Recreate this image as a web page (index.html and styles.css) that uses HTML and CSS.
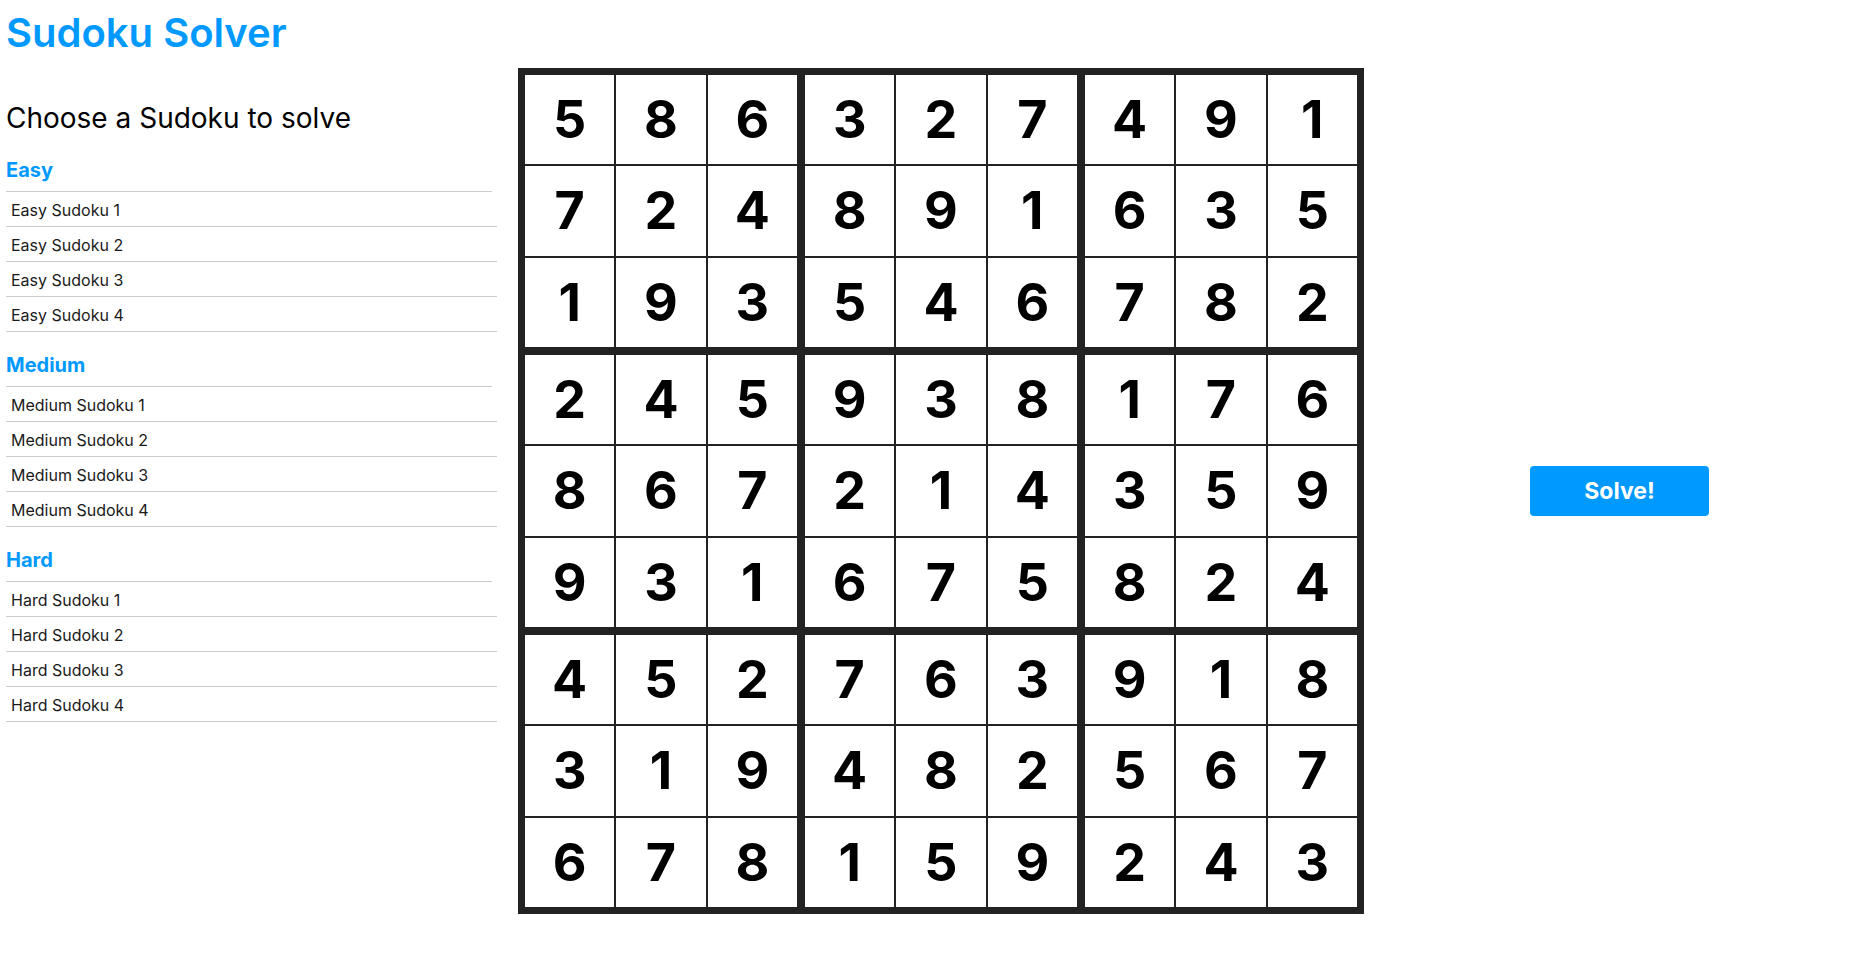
FILE: index.html
```html
<!DOCTYPE html>
<html lang="en">
<head>
  <meta charset="UTF-8">
  <meta name="viewport" content="width=device-width, initial-scale=1.0">
  <title>Sudoku Solver</title>
  <link rel="stylesheet" href="styles.css">
</head>
<body>
  <h1 class="title">Sudoku Solver</h1>

  <main class="layout">
    <aside class="sidebar">
      <h2 class="sidebar-title">Choose a Sudoku to solve</h2>

      <h3 class="level">Easy</h3>
      <ul class="puzzle-list">
        <li>Easy Sudoku 1</li>
        <li>Easy Sudoku 2</li>
        <li>Easy Sudoku 3</li>
        <li>Easy Sudoku 4</li>
      </ul>

      <h3 class="level">Medium</h3>
      <ul class="puzzle-list">
        <li>Medium Sudoku 1</li>
        <li>Medium Sudoku 2</li>
        <li>Medium Sudoku 3</li>
        <li>Medium Sudoku 4</li>
      </ul>

      <h3 class="level">Hard</h3>
      <ul class="puzzle-list">
        <li>Hard Sudoku 1</li>
        <li>Hard Sudoku 2</li>
        <li>Hard Sudoku 3</li>
        <li>Hard Sudoku 4</li>
      </ul>
    </aside>

    <div class="board" id="board"></div>

    <div class="actions">
      <button id="solve" class="solve-btn">Solve!</button>
    </div>
  </main>

  <script>
    // current grid (already solved)
    const grid = [
      [5, 8, 6, 3, 2, 7, 4, 9, 1],
      [7, 2, 4, 8, 9, 1, 6, 3, 5],
      [1, 9, 3, 5, 4, 6, 7, 8, 2],
      [2, 4, 5, 9, 3, 8, 1, 7, 6],
      [8, 6, 7, 2, 1, 4, 3, 5, 9],
      [9, 3, 1, 6, 7, 5, 8, 2, 4],
      [4, 5, 2, 7, 6, 3, 9, 1, 8],
      [3, 1, 9, 4, 8, 2, 5, 6, 7],
      [6, 7, 8, 1, 5, 9, 2, 4, 3]
    ];

    function drawBoard() {
      const board = document.getElementById('board');
      board.innerHTML = '';
      // 9 boxes of 3x3, filled box by box
      for (let b = 0; b < 9; b++) {
        const box = document.createElement('div');
        box.className = 'box';
        const r0 = Math.floor(b / 3) * 3;
        const c0 = (b % 3) * 3;
        for (let i = 0; i < 9; i++) {
          const cell = document.createElement('div');
          cell.className = 'cell';
          const v = grid[r0 + Math.floor(i / 3)][c0 + (i % 3)];
          cell.textContent = v ? v : '';
          box.appendChild(cell);
        }
        board.appendChild(box);
      }
    }

    drawBoard();
  </script>
</body>
</html>
```

FILE: styles.css
```css
/* General */
body {
  margin: 0;
  padding: 0 6px;
  font-family: Inter, "Noto Sans", sans-serif;
  color: #1a1a1a;
  background: #fff;
}

.title {
  margin: 9px 0 11px;
  font-size: 40px;
  font-weight: 600;
  color: #0099ff;
  line-height: 48px;
}

.layout {
  display: flex;
  align-items: flex-start;
}

/* Sidebar with the puzzle lists */
.sidebar {
  width: 491px;
  flex-shrink: 0;
}

.sidebar-title {
  margin: 33px 0 22px;
  font-size: 28px;
  font-weight: 400;
  line-height: 34px;
  color: #000;
}

.level {
  width: calc(100% - 5px);
  margin: 0;
  padding: 1px 0 9px;
  border-bottom: 1px solid #cccccc;
  font-size: 20px;
  font-weight: 700;
  line-height: 24px;
  color: #0099ff;
}

.puzzle-list {
  list-style: none;
  margin: 0 0 20px;
  padding: 0;
}

.puzzle-list li {
  padding: 8px 5px 6px;
  line-height: 20px;
  font-size: 16px;
  border-bottom: 1px solid #cccccc;
  cursor: pointer;
}

/* Board */
.board {
  margin-left: 21px;
  width: 846px;
  box-sizing: border-box;
  padding: 7px;
  background: #222;
  display: grid;
  grid-template-columns: repeat(3, 1fr);
  gap: 8px;
}

.box {
  display: grid;
  grid-template-columns: repeat(3, 1fr);
  gap: 2px;
}

.cell {
  height: 89.33px;
  background: #fff;
  display: flex;
  align-items: center;
  justify-content: center;
  font-size: 52px;
  font-weight: 700;
  color: #000;
}

/* Solve button, centred in the space on the right */
.actions {
  flex: 1;
  align-self: stretch;
  display: flex;
  align-items: center;
  justify-content: center;
}

.solve-btn {
  width: 179px;
  height: 50px;
  margin: 1px 0 0 5px;
  border: none;
  border-radius: 4px;
  background: #0099ff;
  color: #fff;
  font-family: Inter, "Noto Sans", sans-serif;
  font-size: 23px;
  font-weight: 700;
  cursor: pointer;
}
```
